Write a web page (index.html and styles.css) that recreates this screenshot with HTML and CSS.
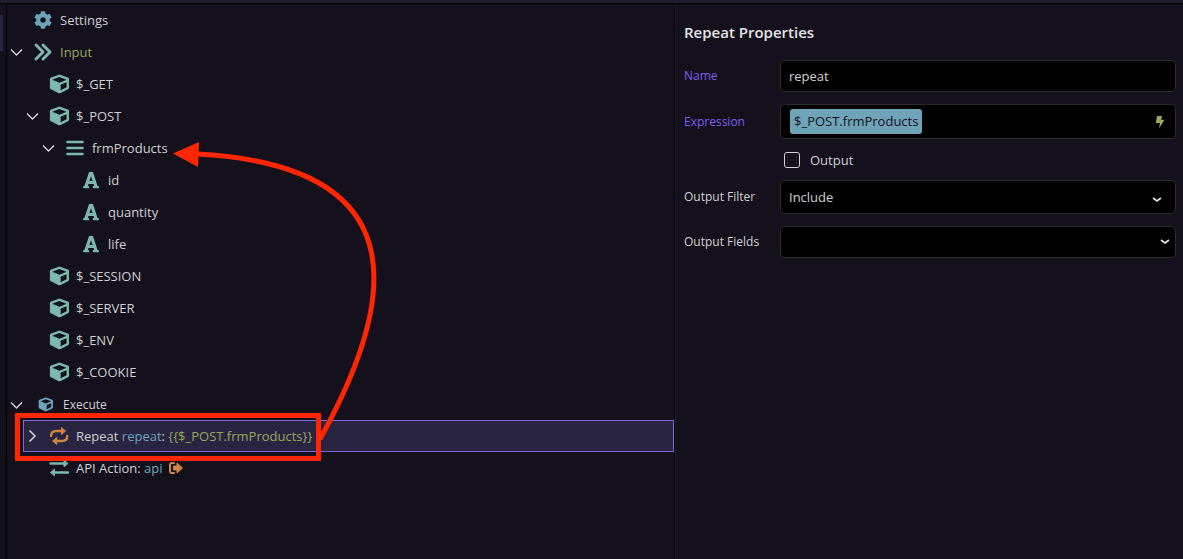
FILE: index.html
```
<!DOCTYPE html>
<html lang="en">
<head>
<meta charset="utf-8">
<title>Server Connect</title>
<link rel="stylesheet" href="styles.css">
</head>
<body>

<!-- icons -->
<svg class="defs">
  <symbol id="down" viewBox="0 0 16 16"><path d="M3 5.500l5.500 5.500 5.500-5.500" fill="none" stroke="currentColor" stroke-width="1.500"/></symbol>
  <symbol id="right" viewBox="0 0 16 16"><path d="M5.500 2.500l5.500 5.500-5.500 5.500" fill="none" stroke="currentColor" stroke-width="1.600"/></symbol>
  <symbol id="gear" viewBox="-26 -26 564 564"><path d="M487.4 315.7l-42.6-24.6c4.3-23.2 4.3-47 0-70.2l42.6-24.6c4.9-2.8 7.1-8.6 5.5-14-11.1-35.6-30-67.8-54.7-94.6-3.8-4.1-10-5.1-14.8-2.3L380.8 110c-17.9-15.4-38.5-27.3-60.8-35.1V25.8c0-5.6-3.9-10.5-9.4-11.7-36.7-8.2-74.3-7.8-109.2 0-5.5 1.2-9.4 6.1-9.4 11.7V75c-22.2 7.9-42.8 19.8-60.8 35.1L88.700 85.5c-4.9-2.8-11-1.9-14.8 2.3-24.7 26.7-43.6 58.900-54.7 94.6-1.7 5.4.6 11.2 5.5 14L67.3 221c-4.3 23.2-4.3 47 0 70.2l-42.6 24.6c-4.9 2.8-7.1 8.6-5.5 14 11.1 35.6 30 67.8 54.7 94.6 3.8 4.1 10 5.1 14.8 2.3l42.6-24.6c17.9 15.4 38.5 27.3 60.8 35.1v49.2c0 5.6 3.9 10.5 9.4 11.7 36.7 8.2 74.3 7.8 109.2 0 5.5-1.2 9.4-6.1 9.4-11.7v-49.2c22.2-7.9 42.8-19.8 60.8-35.1l42.6 24.6c4.9 2.8 11 1.9 14.8-2.3 24.7-26.7 43.6-58.9 54.7-94.6 1.5-5.5-.7-11.3-5.6-14.1zM256 336c-44.1 0-80-35.900-80-80s35.900-80 80-80 80 35.900 80 80-35.900 80-80 80z" fill="currentColor"/></symbol>
  <symbol id="angles" viewBox="0 0 20 20"><path d="M3 3l7 7-7 7M10 3l7 7-7 7" fill="none" stroke="currentColor" stroke-width="2.900" stroke-linecap="round" stroke-linejoin="round"/></symbol>
  <symbol id="cube" viewBox="-24 -12 536 536"><path d="M239.1 6.3l-208 78c-18.7 7-31.1 25-31.1 45v225.1c0 18.2 10.3 34.8 26.5 42.9l208 104c13.5 6.8 29.4 6.8 42.9 0l208-104c16.3-8.1 26.5-24.8 26.5-42.9V129.3c0-20-12.4-37.9-31.1-44.9l-208-78C262 2.2 250 2.2 239.1 6.3zM256 68.4l192 72v1.1l-192 78-192-78v-1.1l192-72zm32 356V275.5l160-65v133.9l-160 80z" fill="currentColor"/></symbol>
  <symbol id="list" viewBox="0 0 20 20"><path d="M2.500 4h15M2.500 10h15M2.500 16h15" stroke="currentColor" stroke-width="2.500" stroke-linecap="round"/></symbol>
  <symbol id="text" viewBox="0 0 20 20"><path d="M4.800 17L9.200 3.500h1.600L15.200 17M7 12.500h6" fill="none" stroke="currentColor" stroke-width="3.200"/><path d="M3 17.200h4.200M12.800 17.200H17" stroke="currentColor" stroke-width="2.200" stroke-linecap="round"/></symbol>
  <symbol id="repeat" viewBox="0 0 20 20"><path d="M2 10Q2 5 7 5h7M18.200 10q0 5-5 5h-7" fill="none" stroke="currentColor" stroke-width="2.400" stroke-linecap="round"/><path d="M12.500 1.500L16.500 5l-4 3.500zM7.700 11.500l-4 3.500 4 3.500z" fill="currentColor" stroke="currentColor" stroke-linejoin="round"/></symbol>
  <symbol id="exchange" viewBox="0 0 20 20"><path d="M1.500 5.500h15M4 14.500h15" stroke="currentColor" stroke-width="2.400" stroke-linecap="round"/><path d="M15 2.200l4 3.300-4 3.300zM5.500 11.200l-4 3.300 4 3.300z" fill="currentColor" stroke="currentColor" stroke-linejoin="round"/></symbol>
  <symbol id="out" viewBox="0 0 14 14"><path d="M5 2H3Q1 2 1 4v6q0 2 2 2h2" fill="none" stroke="currentColor" stroke-width="2" stroke-linecap="round"/><path d="M4.500 5H8V2l5.500 5L8 12V9H4.500z" fill="currentColor" stroke="currentColor" stroke-linejoin="round"/></symbol>
  <symbol id="bolt" viewBox="0 0 10 14"><path d="M2 1h5L6.200 4.800H9.500L4 13.500 5 8H.8z" fill="currentColor"/></symbol>
</svg>

<div class="topbar"></div>
<div class="app">
  <div class="strip"><div class="thumb"></div></div>

  <div class="tree">
    <ul>
      <li><div class="row"><span class="caret"></span><svg class="icon blue"><use href="#gear"/></svg>Settings</div></li>
      <li>
        <div class="row"><svg class="caret"><use href="#down"/></svg><svg class="icon teal"><use href="#angles"/></svg><span class="green">Input</span></div>
        <ul>
          <li><div class="row"><span class="caret"></span><svg class="icon teal"><use href="#cube"/></svg>$_GET</div></li>
          <li>
            <div class="row"><svg class="caret"><use href="#down"/></svg><svg class="icon teal"><use href="#cube"/></svg>$_POST</div>
            <ul>
              <li>
                <div class="row"><svg class="caret"><use href="#down"/></svg><svg class="icon teal"><use href="#list"/></svg>frmProducts</div>
                <ul>
                  <li><div class="row"><span class="caret"></span><svg class="icon teal"><use href="#text"/></svg>id</div></li>
                  <li><div class="row"><span class="caret"></span><svg class="icon teal"><use href="#text"/></svg>quantity</div></li>
                  <li><div class="row"><span class="caret"></span><svg class="icon teal"><use href="#text"/></svg>life</div></li>
                </ul>
              </li>
            </ul>
          </li>
          <li><div class="row"><span class="caret"></span><svg class="icon teal"><use href="#cube"/></svg>$_SESSION</div></li>
          <li><div class="row"><span class="caret"></span><svg class="icon teal"><use href="#cube"/></svg>$_SERVER</div></li>
          <li><div class="row"><span class="caret"></span><svg class="icon teal"><use href="#cube"/></svg>$_ENV</div></li>
          <li><div class="row"><span class="caret"></span><svg class="icon teal"><use href="#cube"/></svg>$_COOKIE</div></li>
        </ul>
      </li>
      <li>
        <div class="row group"><svg class="caret"><use href="#down"/></svg><svg class="icon blue"><use href="#cube"/></svg>Execute</div>
        <ul>
          <li><div class="row selected"><svg class="caret"><use href="#right"/></svg><svg class="icon orange"><use href="#repeat"/></svg><span>Repeat <span class="blue">repeat</span>: <span class="green">{{$_POST.frmProducts}}</span></span></div></li>
          <li><div class="row"><span class="caret"></span><svg class="icon teal"><use href="#exchange"/></svg><span>API Action: <span class="blue">api</span></span><svg class="out orange"><use href="#out"/></svg></div></li>
        </ul>
      </li>
    </ul>

    <!-- annotation over the tree -->
    <svg class="mark" viewBox="0 0 400 480">
      <rect x="10.500" y="411.500" width="301" height="43" fill="none" stroke="#ff2600" stroke-width="5"/>
      <path d="M313 435C385 305 419 162 190 150" fill="none" stroke="#ff2600" stroke-width="5"/>
      <path d="M166 149.500L192 138 191 163z" fill="#ff2600"/>
    </svg>
  </div>

  <form class="props">
    <h2>Repeat Properties</h2>
    <div class="field">
      <label class="purple" for="name">Name</label>
      <input class="box" id="name" type="text" value="repeat">
    </div>
    <div class="field">
      <label class="purple" for="expression">Expression</label>
      <div class="box expression">
        <span class="token">$_POST.frmProducts</span>
        <input id="expression" type="text">
        <button type="button" aria-label="Pick data"><svg class="bolt green"><use href="#bolt"/></svg></button>
      </div>
    </div>
    <div class="check">
      <input id="output" type="checkbox">
      <label for="output">Output</label>
    </div>
    <div class="field">
      <label for="filter">Output Filter</label>
      <select class="box filter" id="filter"><option>Include</option><option>Exclude</option></select>
    </div>
    <div class="field">
      <label for="fields">Output Fields</label>
      <select class="box fields" id="fields"><option></option></select>
    </div>
  </form>
</div>

</body>
</html>
```
FILE: styles.css
```
*{box-sizing:border-box;}
body{margin:0;min-height:100vh;display:flex;flex-direction:column;background:#14111d;color:#d0d0d0;font-family:"Open Sans","Noto Sans",sans-serif;font-size:13px;line-height:20px;}
.defs{display:none;}
.topbar{height:4px;background:#201c2e;border-bottom:1px solid #000;}
.app{flex:1;display:flex;}

.strip{width:7px;border-right:1px solid #000;padding-top:11px;}
.thumb{width:3px;height:36px;background:#292442;}

.tree{position:relative;flex:0 1 668px;border-right:1px solid #000;}
.tree ul{list-style:none;margin:0;padding:0;}
.tree ul ul{margin-left:16px;}
.row{display:flex;align-items:center;height:32px;border:1px solid transparent;white-space:nowrap;}
.caret{width:16px;height:16px;margin-right:9px;}
.icon{width:20px;height:20px;margin-right:7px;}
.group{font-size:12px;padding-top:1px;}
.group .icon{width:15px;height:15px;margin:0 10px 0 5px;}
.selected{background:#292442;border-color:#8068e0;}
.out{width:14px;height:14px;margin-left:7px;}
.mark{position:absolute;left:0;top:0;width:400px;height:480px;pointer-events:none;}

.teal{color:#7bb8ae;}
.blue{color:#6fa3b8;}
.green{color:#98a95c;}
.orange{color:#d28445;}
.purple{color:#7f5ff0;}

.props{flex:1;border-left:1px solid #201c2e;padding:16px 7px 16px 8px;}
.props h2{margin:0 0 16px;font-size:15px;line-height:24px;font-weight:600;color:#e4e4e4;}
.field{display:grid;grid-template-columns:96px 1fr;align-items:center;margin-bottom:12px;}
.field label{font-size:12px;}
.box{width:100%;height:32px;margin:0;padding:0 8px;background:#000;border:1px solid #2c2c2c;border-radius:4px;color:#d0d0d0;font:inherit;outline:none;}
.expression{display:flex;align-items:center;height:35px;}
.expression input{flex:1;min-width:0;background:none;border:0;outline:none;color:#d0d0d0;font:inherit;}
.expression button{display:flex;padding:0;background:none;border:0;margin-right:2px;}
.bolt{width:10px;height:14px;}
.token{height:25px;line-height:25px;padding:0 4px;margin-left:1px;border-radius:3px;background:#6fa3b8;color:#14111d;}
.check{display:flex;align-items:center;height:17px;margin-bottom:12px;padding-left:100px;}
.check input{appearance:none;width:16px;height:16px;margin:0 10px 0 0;border:1px solid #d0d0d0;border-radius:3px;}
select.box{appearance:none;background-image:url("data:image/svg+xml,%3Csvg xmlns='http://www.w3.org/2000/svg' width='10' height='6'%3E%3Cpath d='M1 1l4 3 4-3' fill='none' stroke='%23e4e4e4' stroke-width='1.600'/%3E%3C/svg%3E");background-repeat:no-repeat;}
select.filter{height:34px;background-position:right 13px top 16px;}
select.fields{background-position:right 5px top 12px;}
```
